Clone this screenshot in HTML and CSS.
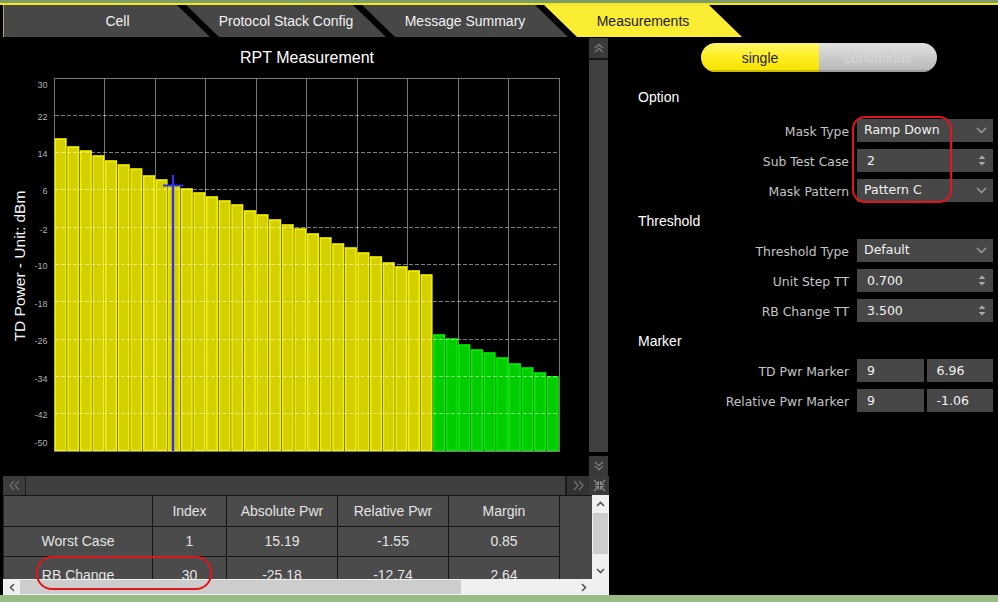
FILE: index.html
```html
<!DOCTYPE html>
<html>
<head>
<meta charset="utf-8">
<title>RPT Measurement</title>
<link rel="stylesheet" href="styles.css">
</head>
<body>
<div class="app">
  <div class="topstrip"></div>
  <div class="topline"></div>
  <div class="tabs">
    <div class="tab tab-first">Cell</div>
    <div class="tab tab-2">Protocol Stack Config</div>
    <div class="tab tab-3">Message Summary</div>
    <div class="tab tab-4 tab-active">Measurements</div>
  </div>
  <div class="main">
    <div class="left">
      <div class="chart-row">
        <div class="chart">
          <svg class="chart-svg" width="586" height="439" viewBox="3 37 586 439">
            <text class="chart-title" x="307" y="62.7" text-anchor="middle">RPT Measurement</text>
            <text class="axis-title" transform="translate(24.5,266) rotate(-90)" text-anchor="middle">TD Power - Unit: dBm</text>
            <g class="ytick" text-anchor="end">
              <text x="47.5" y="88.2">30</text>
              <text x="47.5" y="119.9">22</text>
              <text x="47.5" y="156.5">14</text>
              <text x="47.5" y="193.9">6</text>
              <text x="47.5" y="232.5">-2</text>
              <text x="47.5" y="269.2">-10</text>
              <text x="47.5" y="306.9">-18</text>
              <text x="47.5" y="343.9">-26</text>
              <text x="47.5" y="381.9">-34</text>
              <text x="47.5" y="417.9">-42</text>
              <text x="47.5" y="445.9">-50</text>
            </g>
            <g stroke="#777" stroke-width="1">
              <line x1="54.5" y1="78" x2="54.5" y2="452"/>
              <line x1="104.5" y1="78" x2="104.5" y2="452"/>
              <line x1="155.5" y1="78" x2="155.5" y2="452"/>
              <line x1="205.5" y1="78" x2="205.5" y2="452"/>
              <line x1="256.5" y1="78" x2="256.5" y2="452"/>
              <line x1="306.5" y1="78" x2="306.5" y2="452"/>
              <line x1="357.5" y1="78" x2="357.5" y2="452"/>
              <line x1="407.5" y1="78" x2="407.5" y2="452"/>
              <line x1="458.5" y1="78" x2="458.5" y2="452"/>
              <line x1="508.5" y1="78" x2="508.5" y2="452"/>
              <line x1="559.5" y1="78" x2="559.5" y2="452"/>
              <line x1="54" y1="78.5" x2="560" y2="78.5"/>
            </g>
            <g fill="#d4d000" stroke="#f4f000" stroke-width="1.6">
              <rect x="55.30" y="139" width="10.6" height="311.5"/>
              <rect x="67.92" y="147" width="10.6" height="303.5"/>
              <rect x="80.54" y="151" width="10.6" height="299.5"/>
              <rect x="93.15" y="156" width="10.6" height="294.5"/>
              <rect x="105.77" y="161" width="10.6" height="289.5"/>
              <rect x="118.39" y="165" width="10.6" height="285.5"/>
              <rect x="131.01" y="169" width="10.6" height="281.5"/>
              <rect x="143.62" y="176" width="10.6" height="274.5"/>
              <rect x="156.24" y="180" width="10.6" height="270.5"/>
              <rect x="168.86" y="186" width="10.6" height="264.5"/>
              <rect x="181.48" y="189" width="10.6" height="261.5"/>
              <rect x="194.09" y="193" width="10.6" height="257.5"/>
              <rect x="206.71" y="197" width="10.6" height="253.5"/>
              <rect x="219.33" y="201" width="10.6" height="249.5"/>
              <rect x="231.95" y="205" width="10.6" height="245.5"/>
              <rect x="244.56" y="211" width="10.6" height="239.5"/>
              <rect x="257.18" y="215" width="10.6" height="235.5"/>
              <rect x="269.80" y="220" width="10.6" height="230.5"/>
              <rect x="282.42" y="225" width="10.6" height="225.5"/>
              <rect x="295.03" y="229" width="10.6" height="221.5"/>
              <rect x="307.65" y="234" width="10.6" height="216.5"/>
              <rect x="320.27" y="238" width="10.6" height="212.5"/>
              <rect x="332.89" y="244" width="10.6" height="206.5"/>
              <rect x="345.50" y="248" width="10.6" height="202.5"/>
              <rect x="358.12" y="253" width="10.6" height="197.5"/>
              <rect x="370.74" y="257" width="10.6" height="193.5"/>
              <rect x="383.36" y="263" width="10.6" height="187.5"/>
              <rect x="395.97" y="267" width="10.6" height="183.5"/>
              <rect x="408.59" y="271" width="10.6" height="179.5"/>
              <rect x="421.21" y="275" width="10.6" height="175.5"/>
            </g>
            <g fill="#00cc00" stroke="#00ee00" stroke-width="1.6">
              <rect x="433.83" y="335" width="10.6" height="115.5"/>
              <rect x="446.44" y="339" width="10.6" height="111.5"/>
              <rect x="459.06" y="345" width="10.6" height="105.5"/>
              <rect x="471.68" y="350" width="10.6" height="100.5"/>
              <rect x="484.30" y="353" width="10.6" height="97.5"/>
              <rect x="496.91" y="358" width="10.6" height="92.5"/>
              <rect x="509.53" y="364" width="10.6" height="86.5"/>
              <rect x="522.15" y="368" width="10.6" height="82.5"/>
              <rect x="534.77" y="373" width="10.6" height="77.5"/>
              <rect x="547.38" y="377" width="10.6" height="73.5"/>
            </g>
            <g stroke="rgba(255,255,255,0.5)" stroke-width="1" stroke-dasharray="4 2">
              <line x1="55" y1="115.5" x2="559" y2="115.5"/>
              <line x1="55" y1="152.5" x2="559" y2="152.5"/>
              <line x1="55" y1="189.5" x2="559" y2="189.5"/>
              <line x1="55" y1="227.5" x2="559" y2="227.5"/>
              <line x1="55" y1="264.5" x2="559" y2="264.5"/>
              <line x1="55" y1="301.5" x2="559" y2="301.5"/>
              <line x1="55" y1="339.5" x2="559" y2="339.5"/>
              <line x1="55" y1="376.5" x2="559" y2="376.5"/>
              <line x1="55" y1="413.5" x2="559" y2="413.5"/>
            </g>
            <line x1="54" y1="451.5" x2="560" y2="451.5" stroke="#777" stroke-width="1"/>
            <g stroke="#3333ee">
              <line x1="173" y1="175" x2="173" y2="451" stroke-width="2.3"/>
              <line x1="163" y1="185.5" x2="183" y2="185.5" stroke-width="2"/>
            </g>
          </svg>
        </div>
        <div class="vscroll">
          <div class="sbtn">
            <svg width="10" height="10" viewBox="0 0 10 10"><path d="M1 5 L5 1.5 L9 5 M1 9 L5 5.5 L9 9" fill="none" stroke="#7a7a7a" stroke-width="1.4"/></svg>
          </div>
          <div class="vscroll-divider"></div>
          <div class="vscroll-track"></div>
          <div class="vscroll-gap"></div>
          <div class="sbtn">
            <svg width="10" height="10" viewBox="0 0 10 10"><path d="M1 1 L5 4.5 L9 1 M1 5 L5 8.5 L9 5" fill="none" stroke="#7a7a7a" stroke-width="1.4"/></svg>
          </div>
        </div>
      </div>
      <div class="hscroll">
        <div class="hbtn hbtn-left">
          <svg width="11" height="11" viewBox="0 0 11 11"><path d="M5 1 L1 5.5 L5 10 M10 1 L6 5.5 L10 10" fill="none" stroke="#6c6c6c" stroke-width="1.4"/></svg>
        </div>
        <div class="htrack"></div>
        <div class="hbtn hbtn-right">
          <svg width="11" height="11" viewBox="0 0 11 11"><path d="M1 1 L5 5.5 L1 10 M6 1 L10 5.5 L6 10" fill="none" stroke="#6c6c6c" stroke-width="1.4"/></svg>
        </div>
        <div class="hbtn hbtn-compress">
          <svg width="13" height="13" viewBox="0 0 13 13"><path d="M1 1 L5.5 5.5 M5.5 2 L5.5 5.5 L2 5.5 M12 1 L7.5 5.5 M7.5 2 L7.5 5.5 L11 5.5 M1 12 L5.5 7.5 M2 7.5 L5.5 7.5 L5.5 11 M12 12 L7.5 7.5 M11 7.5 L7.5 7.5 L7.5 11" fill="none" stroke="#8c8c8c" stroke-width="1.1"/></svg>
        </div>
      </div>
      <div class="table-area">
        <div class="table-view">
          <table class="result-table">
            <colgroup>
              <col class="c-label"><col class="c-index"><col class="c-val"><col class="c-val"><col class="c-val">
            </colgroup>
            <tr><td></td><td>Index</td><td>Absolute Pwr</td><td>Relative Pwr</td><td>Margin</td></tr>
            <tr><td>Worst Case</td><td>1</td><td>15.19</td><td>-1.55</td><td>0.85</td></tr>
            <tr class="row-tall"><td>RB Change</td><td>30</td><td>-25.18</td><td>-12.74</td><td>2.64</td></tr>
          </table>
        </div>
        <div class="lvscroll">
          <div class="lbtn lbtn-top">
            <svg width="9" height="6" viewBox="0 0 9 6"><path d="M1 5 L4.5 1.5 L8 5" fill="none" stroke="#555" stroke-width="1.6"/></svg>
          </div>
          <div class="lthumb-v"></div>
          <div class="lspacer"></div>
          <div class="lbtn lbtn-bottom">
            <svg width="9" height="6" viewBox="0 0 9 6"><path d="M1 1 L4.5 4.5 L8 1" fill="none" stroke="#555" stroke-width="1.6"/></svg>
          </div>
        </div>
        <div class="lhscroll">
          <div class="lbtn lbtn-side">
            <svg width="6" height="9" viewBox="0 0 6 9"><path d="M5 1 L1.5 4.5 L5 8" fill="none" stroke="#555" stroke-width="1.6"/></svg>
          </div>
          <div class="lthumb-h"></div>
          <div class="lspacer"></div>
          <div class="lbtn lbtn-side">
            <svg width="6" height="9" viewBox="0 0 6 9"><path d="M1 1 L4.5 4.5 L1 8" fill="none" stroke="#555" stroke-width="1.6"/></svg>
          </div>
        </div>
        <div class="lcorner"></div>
        <div class="mark mark-table"></div>
      </div>
    </div>
    <div class="right">
      <div class="mode-toggle">
        <div class="mode-opt mode-on">single</div>
        <div class="mode-opt mode-off">continuous</div>
      </div>

      <div class="section-title first">Option</div>
      <div class="form-rows first">
        <div class="form-row">
          <div class="f-label">Mask Type</div>
          <div class="f-box f-select"><span>Ramp Down</span>
            <svg width="11" height="7" viewBox="0 0 11 7"><path d="M1 1 L5.5 5.5 L10 1" fill="none" stroke="#a0a0a0" stroke-width="1.3"/></svg>
          </div>
        </div>
        <div class="form-row">
          <div class="f-label">Sub Test Case</div>
          <div class="f-box f-spin"><span>2</span>
            <svg width="8" height="11" viewBox="0 0 8 11"><path d="M4 0.5 L7.5 4 L0.5 4 Z M0.5 7 L7.5 7 L4 10.5 Z" fill="#a8a8a8"/></svg>
          </div>
        </div>
        <div class="form-row">
          <div class="f-label">Mask Pattern</div>
          <div class="f-box f-select"><span>Pattern C</span>
            <svg width="11" height="7" viewBox="0 0 11 7"><path d="M1 1 L5.5 5.5 L10 1" fill="none" stroke="#a0a0a0" stroke-width="1.3"/></svg>
          </div>
        </div>
      </div>

      <div class="section-title">Threshold</div>
      <div class="form-rows">
        <div class="form-row">
          <div class="f-label">Threshold Type</div>
          <div class="f-box f-select"><span>Default</span>
            <svg width="11" height="7" viewBox="0 0 11 7"><path d="M1 1 L5.5 5.5 L10 1" fill="none" stroke="#a0a0a0" stroke-width="1.3"/></svg>
          </div>
        </div>
        <div class="form-row">
          <div class="f-label">Unit Step TT</div>
          <div class="f-box f-spin"><span>0.700</span>
            <svg width="8" height="11" viewBox="0 0 8 11"><path d="M4 0.5 L7.5 4 L0.5 4 Z M0.5 7 L7.5 7 L4 10.5 Z" fill="#a8a8a8"/></svg>
          </div>
        </div>
        <div class="form-row">
          <div class="f-label">RB Change TT</div>
          <div class="f-box f-spin"><span>3.500</span>
            <svg width="8" height="11" viewBox="0 0 8 11"><path d="M4 0.5 L7.5 4 L0.5 4 Z M0.5 7 L7.5 7 L4 10.5 Z" fill="#a8a8a8"/></svg>
          </div>
        </div>
      </div>

      <div class="section-title">Marker</div>
      <div class="form-rows">
        <div class="form-row">
          <div class="f-label">TD Pwr Marker</div>
          <div class="f-pair">
            <div class="f-box f-spin"><span>9</span></div>
            <div class="f-box f-spin"><span>6.96</span></div>
          </div>
        </div>
        <div class="form-row">
          <div class="f-label">Relative Pwr Marker</div>
          <div class="f-pair">
            <div class="f-box f-spin"><span>9</span></div>
            <div class="f-box f-spin"><span>-1.06</span></div>
          </div>
        </div>
      </div>

      <div class="mark mark-option"></div>
    </div>
  </div>
  <div class="bottomstrip"></div>
</div>
</body>
</html>
```

FILE: styles.css
```css
* { box-sizing: border-box; }

html, body {
  margin: 0;
  padding: 0;
  background: #000;
}

body {
  width: 998px;
  height: 602px;
  overflow: hidden;
  font-family: "Liberation Sans", Arial, sans-serif;
}

.app {
  width: 998px;
  height: 602px;
  display: flex;
  flex-direction: column;
  background: #000;
}

.topstrip { height: 3px; background: #7f9d6c; }
.topline { height: 2px; background: #f2e61c; }

/* ---------- tabs ---------- */
.tabs {
  height: 32px;
  display: flex;
  padding-left: 3px;
  background: #000;
}

.tab {
  flex: none;
  height: 32px;
  margin-left: -24px;
  display: flex;
  align-items: center;
  justify-content: center;
  background: #474747;
  color: #f2f2f2;
  font-size: 14px;
  clip-path: polygon(0 0, calc(100% - 33px) 0, 100% 100%, 33px 100%);
}

.tab-first {
  margin-left: 0;
  width: 207px;
  padding-left: 22px;
  clip-path: polygon(0 0, calc(100% - 33px) 0, 100% 100%, 0 100%);
  box-shadow: inset 1px 0 0 #b8ae2a;
}
.tab-2 { width: 200px; }
.tab-3 { width: 206px; }
.tab-4 { width: 198px; }

.tab-active {
  background: #fbec34;
  color: #1c1c1c;
}

/* ---------- main ---------- */
.main {
  height: 558px;
  display: flex;
  padding-left: 3px;
}

.left {
  width: 606px;
  display: flex;
  flex-direction: column;
}

.chart-row {
  height: 439px;
  display: flex;
}

.chart {
  width: 586px;
  height: 439px;
  background: #000;
}

.chart-svg { display: block; }

.chart-title {
  font-family: "Liberation Sans", Arial, sans-serif;
  font-size: 16px;
  fill: #ffffff;
}

.axis-title {
  font-family: "Liberation Sans", Arial, sans-serif;
  font-size: 15.5px;
  fill: #f4f4f4;
}

.ytick text {
  font-family: "Liberation Sans", Arial, sans-serif;
  font-size: 9px;
  fill: #b0b0b0;
}

/* dark scrollbars around the chart */
.vscroll {
  width: 19px;
  margin-right: 1px;
  display: flex;
  flex-direction: column;
  padding-top: 1px;
}

.sbtn {
  height: 20px;
  background: #3a3a3a;
  display: flex;
  align-items: center;
  justify-content: center;
}

.vscroll-divider { height: 2px; background: #161616; }
.vscroll-track { flex: 1; background: #404040; }
.vscroll-gap { height: 4px; background: #000; }

.hscroll {
  height: 19px;
  display: flex;
  background: #1a1a1a;
}

.hbtn {
  display: flex;
  align-items: center;
  justify-content: center;
  height: 19px;
}

.hbtn-left { width: 22px; background: #3c3c3c; margin-right: 1px; }
.htrack { width: 539px; background: #3f3f3f; margin-right: 2px; }
.hbtn-right { width: 22px; background: #323232; }
.hbtn-compress { width: 20px; background: #3a3a3a; }

/* ---------- table ---------- */
.table-area {
  position: relative;
  height: 100px;
  display: grid;
  grid-template-columns: 589px 17px;
  grid-template-rows: 84px 16px;
}

.table-view {
  overflow: hidden;
  background: #484848;
  border-top: 1px solid #151515;
}

.result-table {
  border-collapse: collapse;
  table-layout: fixed;
  width: 556px;
  font-size: 14px;
  color: #e4e4e4;
}

.c-label { width: 149px; }
.c-index { width: 74px; }
.c-val { width: 111px; }

.result-table td {
  height: 30px;
  padding: 0;
  text-align: center;
  vertical-align: middle;
  background: #4b4b4b;
  border: 1px solid #151515;
  border-top: none;
  white-space: nowrap;
}

.result-table .row-tall td { height: 38px; }

.result-table td:first-child { border-left: 1px solid #222; }

.lvscroll {
  background: #f0f0f0;
  display: flex;
  flex-direction: column;
  align-items: stretch;
}

.lhscroll {
  background: #f0f0f0;
  display: flex;
}

.lcorner { background: #f0f0f0; }

.lbtn {
  display: flex;
  align-items: center;
  justify-content: center;
}

.lbtn-top { height: 18px; }
.lbtn-bottom { height: 17px; }
.lbtn-side { width: 17px; }

.lthumb-v { height: 41px; background: #cdcdcd; margin: 0 1px; }
.lthumb-h { width: 441px; background: #cdcdcd; margin: 1px 0; }
.lspacer { flex: 1; }

/* ---------- right panel ---------- */
.right {
  flex: 1;
  position: relative;
  padding-top: 6px;
  padding-right: 5px;
  background: #000;
}

.mode-toggle {
  width: 236px;
  height: 29px;
  margin-left: 92px;
  display: flex;
  border-radius: 15px;
  overflow: hidden;
}

.mode-opt {
  flex: 1;
  display: flex;
  align-items: center;
  justify-content: center;
  font-size: 14px;
}

.mode-on {
  background: linear-gradient(#fff66e, #ffee22 45%, #f7e200);
  color: #1e1e1e;
  box-shadow: inset 0 -2px 0 #cdbb00;
}

.mode-off {
  background: linear-gradient(#e2e2e2, #c9c9c9 55%, #b6b6b6);
  color: #d6d6d6;
  box-shadow: inset 0 -2px 0 #9c9c9c;
}

.section-title {
  height: 20px;
  line-height: 20px;
  margin-top: 9px;
  margin-left: 29px;
  font-size: 14px;
  color: #ffffff;
}

.section-title.first { margin-top: 15px; }

.form-rows {
  display: flex;
  flex-direction: column;
  gap: 7px;
  margin-top: 8px;
}

.form-rows.first { margin-top: 12px; }

.form-row {
  height: 23px;
  display: grid;
  grid-template-columns: 1fr 136px;
  column-gap: 8px;
}

.f-label {
  text-align: right;
  line-height: 25px;
  font-family: "DejaVu Sans", Verdana, sans-serif;
  font-size: 12.4px;
  color: #c4c4c4;
  white-space: nowrap;
}

.f-box {
  height: 23px;
  background: #474747;
  display: flex;
  align-items: center;
  justify-content: space-between;
  font-family: "DejaVu Sans", Verdana, sans-serif;
  font-size: 12.5px;
  color: #f2f2f2;
}

.f-select { padding: 0 6px 0 7px; }
.f-select span { margin-top: -2px; }
.f-spin { padding: 0 7px 0 10px; }

.f-pair {
  display: flex;
  gap: 3px;
}

.f-pair .f-box { flex: 1; }

/* ---------- annotations ---------- */
.mark {
  position: absolute;
  border: 2px solid #e3141c;
  border-radius: 13px;
  pointer-events: none;
}

.mark-option {
  left: 243px;
  top: 79px;
  width: 100px;
  height: 87px;
}

.mark-table {
  left: 33px;
  top: 61px;
  width: 176px;
  height: 34px;
  border-radius: 16px;
}

.bottomstrip {
  height: 7px;
  background: #98bb86;
}
```
